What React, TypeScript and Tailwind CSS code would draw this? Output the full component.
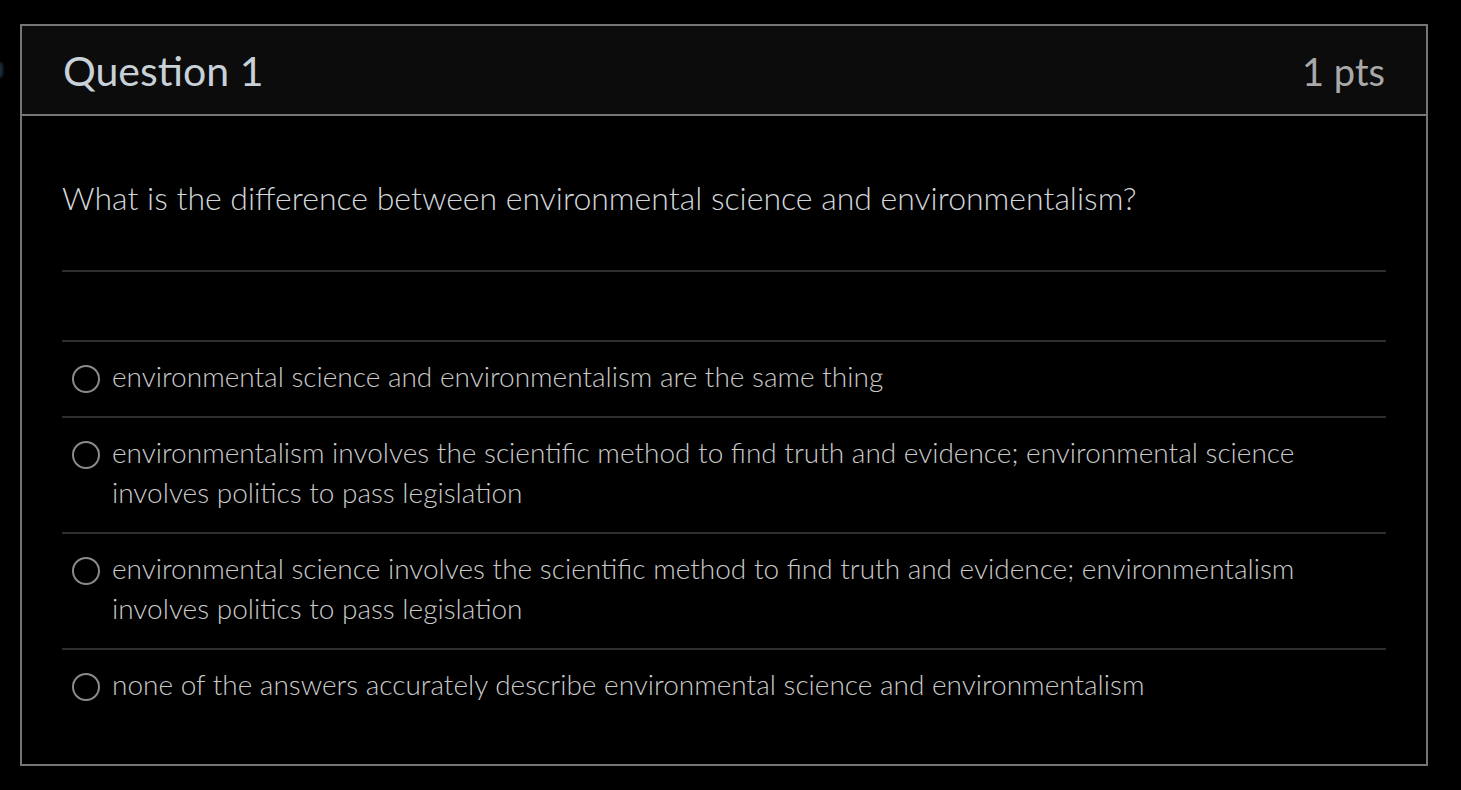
import React from "react";

const answers = [
  "environmental science and environmentalism are the same thing",
  "environmentalism involves the scientific method to find truth and evidence; environmental science involves politics to pass legislation",
  "environmental science involves the scientific method to find truth and evidence; environmentalism involves politics to pass legislation",
  "none of the answers accurately describe environmental science and environmentalism",
];

export default function App() {
  return (
    <div
      className="relative w-[1461px] h-[790px] bg-black overflow-hidden pt-[24px] pl-[20px]"
      style={{ fontFamily: "Lato, 'Open Sans', sans-serif" }}
    >
      <div className="absolute left-[-6px] top-[62px] w-[9px] h-[16px] rounded-full bg-[#1a2a3a] blur-[1px]" />
      <div className="w-[1408px] h-[742px] border-2 border-[#767676] flex flex-col">
        <div className="h-[90px] bg-[#0c0c0c] border-b-2 border-[#767676] flex items-center justify-between px-[41px]">
          <div className="text-[41px] text-[#c8d0d8] leading-none">Question 1</div>
          <div className="text-[38px] text-[#a9a9a9] leading-none pt-[2px]">1 pts</div>
        </div>
        <div className="px-[40px] flex flex-col">
          <div className="pt-[62px] pb-[52px] border-b-2 border-[#2e2e2e]">
            <div className="text-[32px] font-light leading-[40px] text-[#d2d6da]">
              What is the difference between environmental science and environmentalism?
            </div>
          </div>
          <div className="h-[70px] border-b-2 border-[#2e2e2e]" />
          {answers.map((a, i) => (
            <div
              key={i}
              className={`flex items-start pt-[14px] pb-[20px] pl-[10px] pr-[80px] ${i < answers.length - 1 ? "border-b-2 border-[#2e2e2e]" : ""}`}
            >
              <div className="w-[28px] h-[28px] mt-[9px] rounded-full border-[2.5px] border-[#8a8a8a] shrink-0" />
              <div className="ml-[12px] text-[28px] font-light leading-[40px] text-[#cacaca]">{a}</div>
            </div>
          ))}
        </div>
      </div>
    </div>
  );
}
